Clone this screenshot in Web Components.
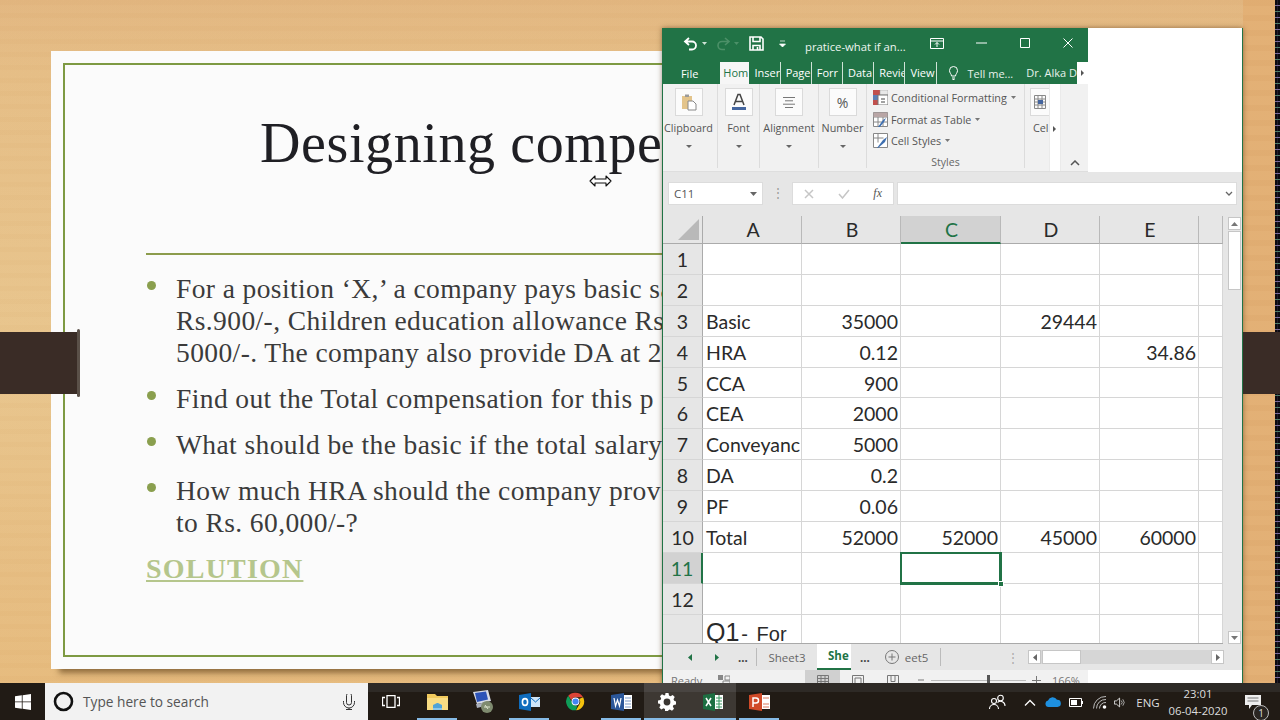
<!DOCTYPE html>
<html>
<head>
<meta charset="utf-8">
<title>Designing compensation</title>
<style>
  html, body { margin: 0; width: 1280px; height: 720px; overflow: hidden; }
  body { font-family: "Open Sans", sans-serif; }
</style>
</head>
<body>
<desk-top>
  <ppt-slide>
    <bullet-item>
      <span>For a position ‘X,’ a company pays basic sa</span>
      <span>Rs.900/-, Children education allowance Rs.</span>
      <span>5000/-. The company also provide DA at 2</span>
    </bullet-item>
    <bullet-item><span>Find out the Total compensation for this p</span></bullet-item>
    <bullet-item><span>What should be the basic if the total salary</span></bullet-item>
    <bullet-item>
      <span>How much HRA should the company prov</span>
      <span>to Rs. 60,000/-?</span>
    </bullet-item>
  </ppt-slide>
  <excel-window></excel-window>
  <win-taskbar></win-taskbar>
</desk-top>

<script>
  const define = (name, html) => {
    customElements.define(name, class extends HTMLElement {
      constructor() {
        super()
        this.attachShadow({ mode: 'open' }).innerHTML = html
      }
    })
  }

  const drop = '<svg width="5" height="3" viewBox="0 0 5 3"><path d="M0 0h5L2.500 3z" fill="#777"/></svg>'

  define('desk-top', `
<style>
  :host {
    display: block;
    position: relative;
    width: 1280px;
    height: 720px;
    overflow: hidden;
    background:
      repeating-linear-gradient(180deg, rgba(190,130,60,.025) 0 5px, rgba(255,235,190,.025) 5px 13px),
      linear-gradient(180deg, #e2b680 0, #e5bd85 10%, #e8c58d 50%, #e6bd82 80%, #e6ba7c 100%);
  }
  .right {
    position: absolute; left: 1243px; top: 0; width: 32px; height: 683px;
    background: repeating-linear-gradient(180deg, rgba(170,100,40,.03) 0 6px, rgba(255,220,170,.03) 6px 15px), #e2af74;
  }
  .noise {
    position: absolute; left: 1275px; top: 0; width: 5px; height: 683px;
    background:
      repeating-linear-gradient(180deg, transparent 0 5px, #7a6a9a 5px 6px, transparent 6px 11px, #4f7d6a 11px 12px),
      repeating-linear-gradient(90deg, #0c0a10 0 2px, #241d2a 2px 3px);
  }
  .band {
    position: absolute; top: 332px; height: 62px; background: #3a2c26;
  }
  .band.l { left: 0; width: 78px; }
  .band.l::after {
    content: ""; position: absolute; right: -2px; top: -3px; bottom: -3px; width: 3px;
    background: #5a5048; border-radius: 2px;
  }
  .band.r { left: 1243px; width: 37px; }
  .cursor { position: absolute; left: 589px; top: 175px; }
</style>
<div class="right"></div>
<div class="noise"></div>
<slot></slot>
<div class="band l"></div>
<div class="band r"></div>
<svg class="cursor" width="24" height="12" viewBox="0 0 24 12">
  <path d="M1 6l5-5v3h11V1l5 5-5 5V8H6v3z" fill="#fff" stroke="#111" stroke-width="1.100" stroke-linejoin="round"/>
</svg>
`)

  define('ppt-slide', `
<style>
  :host {
    display: block;
    position: absolute;
    left: 51px; top: 51px;
    width: 660px; height: 618px;
    box-sizing: border-box;
    padding: 12px;
    background: #fbfbfb;
    box-shadow: 6px 6px 6px -2px rgba(95,65,25,.65);
    font-family: "Liberation Serif", serif;
    color: #3b3b3b;
  }
  .frame {
    box-sizing: border-box;
    height: 100%;
    border: 2px solid #7e9a43;
    border-right: 0;
    padding-top: 48px;
  }
  h1 {
    margin: 0 0 0 195px;
    font-size: 56px;
    line-height: 60px;
    font-weight: 400;
    letter-spacing: .600px;
    color: #1f1f24;
    white-space: nowrap;
  }
  hr {
    margin: 80px 0 18px 81px;
    height: 2px;
    border: 0;
    background: #8c9c4c;
  }
  .list {
    margin-left: 81px;
    display: flex;
    flex-direction: column;
    gap: 14px;
  }
  .sol {
    font-size: 28px;
    line-height: 32px;
    font-weight: 700;
    letter-spacing: 1.200px;
    color: #b5c68c;
    text-decoration: underline;
  }
</style>
<div class="frame">
  <h1>Designing compe</h1>
  <hr>
  <div class="list">
    <slot></slot>
    <div class="sol">SOLUTION</div>
  </div>
</div>
`)

  define('bullet-item', `
<style>
  :host {
    display: block;
    position: relative;
    padding-left: 30px;
    font-size: 27.500px;
    line-height: 32px;
    letter-spacing: .400px;
    white-space: nowrap;
  }
  :host::before {
    content: "";
    position: absolute;
    left: 1px; top: 8px;
    width: 9px; height: 9px;
    border-radius: 50%;
    background: #8a9f4e;
  }
  ::slotted(span) { display: block; }
</style>
<slot></slot>
`)

  define('excel-window', `
<style>
  :host {
    display: block;
    position: absolute;
    left: 662px; top: 28px;
    width: 581px; height: 662px;
    box-sizing: border-box;
    border: 1px solid #217346;
    border-width: 0 1px 0 1px;
    background: #e6e6e6;
    box-shadow: 0 0 5px rgba(80,50,20,.55);
    color: #444;
  }
  .top { display: flex; height: 144px; background: #fff; }
  .left { width: 425px; display: flex; flex-direction: column; }
</style>
<div class="top">
  <div class="left">
    <xl-titlebar></xl-titlebar>
    <xl-ribbon></xl-ribbon>
  </div>
</div>
<xl-formula></xl-formula>
<xl-sheet></xl-sheet>
<xl-tabs></xl-tabs>
<xl-status></xl-status>
`)

  define('xl-titlebar', `
<style>
  :host { display: block; background: #217346; color: #fff; font-size: 11px; }
  .qat { display: flex; align-items: center; height: 34px; box-sizing: border-box; padding-bottom: 4px; }
  .qat > * { flex: none; }
  .name { margin-left: 19px; padding-top: 6px; color: #eef5f0; font-size: 11.300px; white-space: nowrap; }
  .tabs { display: flex; height: 22px; align-items: stretch; white-space: nowrap; }
  .file { width: 55px; padding-right: 4px; text-align: center; line-height: 24px; }
  .tab {
    width: 32px; box-sizing: border-box; padding-left: 5px; overflow: hidden;
    line-height: 22px; border-right: 1px solid #cfe3d7;
  }
  .tab.on { width: 30px; background: #f6f6f6; color: #217346; border: 0; padding-left: 3px; }
  .tell { display: flex; align-items: center; gap: 10px; margin-left: 11px; color: #e7f1eb; width: 71px; }
  .user { margin-left: 10px; width: 51px; line-height: 22px; color: #e7f1eb; }
  .more { width: 11px; background: #fff; display: flex; align-items: center; justify-content: center; }
</style>
<div class="qat">
  <svg style="margin-left:20px" width="15" height="15" viewBox="0 0 15 15"><path d="M6 2L2 5.500 6 9M2.500 5.500H9a3.800 3.800 0 0 1 0 8H6" fill="none" stroke="#fff" stroke-width="1.800"/></svg>
  <svg style="margin-left:4px" width="5" height="3" viewBox="0 0 5 3"><path d="M0 0h5L2.500 3z" fill="#cfe3d7"/></svg>
  <svg style="margin-left:9px" width="15" height="15" viewBox="0 0 15 15"><path d="M9 2l4 3.500L9 9M12.500 5.500H6a3.800 3.800 0 0 0 0 8h3" fill="none" stroke="#4c9068" stroke-width="1.600"/></svg>
  <svg style="margin-left:3px" width="5" height="3" viewBox="0 0 5 3"><path d="M0 0h5L2.500 3z" fill="#4c9068"/></svg>
  <svg style="margin-left:10px" width="15" height="15" viewBox="0 0 15 15"><path d="M1 1h11l2 2v11H1zM4 1.500v4h7v-4M4 14V9.500h7V14M8.500 11v3" fill="none" stroke="#fff" stroke-width="1.600"/></svg>
  <svg style="margin-left:15px" width="7" height="7" viewBox="0 0 7 7"><path d="M1 1h5M0.500 4h6L3.500 7z" fill="#fff" stroke="#fff" stroke-width=".7"/></svg>
  <span class="name">pratice-what if an...</span>
  <svg style="margin-left:24px" width="14" height="11" viewBox="0 0 14 11"><path d="M.5.500h13v10H.5zM.5 3h13M7 9V4.500M5 6.500l2-2 2 2" fill="none" stroke="#fff"/></svg>
  <svg style="margin-left:32px" width="11" height="2" viewBox="0 0 11 2"><path d="M0 1h11" stroke="#fff"/></svg>
  <svg style="margin-left:33px" width="10" height="10" viewBox="0 0 10 10"><path d="M.5.500h9v9h-9z" fill="none" stroke="#fff"/></svg>
  <svg style="margin-left:33px" width="10" height="10" viewBox="0 0 10 10"><path d="M.5.500l9 9M9.500.500l-9 9" stroke="#fff"/></svg>
</div>
<div class="tabs">
  <div class="file">File</div>
  <div class="tab on">Hom</div>
  <div class="tab">Inser</div>
  <div class="tab">Page</div>
  <div class="tab">Forr</div>
  <div class="tab">Data</div>
  <div class="tab">Revie</div>
  <div class="tab">View</div>
  <div class="tell">
    <svg width="9" height="14" viewBox="0 0 9 14" style="margin-left:1px"><path d="M2.500 10C2.500 8 .5 7 .5 4.500a4 4 0 0 1 8 0C8.500 7 6.500 8 6.500 10zM3 12h3M3.500 13.500h2" fill="none" stroke="#fff"/></svg>
    <span>Tell me...</span>
  </div>
  <div class="user">Dr. Alka D.</div>
  <div class="more"><svg width="3" height="6" viewBox="0 0 3 6"><path d="M0 0l3 3-3 3z" fill="#555"/></svg></div>
</div>
`)

  define('rb-big', `
<style>
  :host {
    display: flex; flex-direction: column; align-items: center;
    height: 84px; box-sizing: border-box; padding-top: 4px;
    border-right: 1px solid #dcdcdc;
    font-size: 10.800px; color: #555; white-space: nowrap;
  }
  .box {
    flex: none; width: 28px; height: 28px; box-sizing: border-box;
    background: #fbfbfb; border: 1px solid #dadada;
    display: flex; align-items: center; justify-content: center;
  }
  .label { margin-top: 4px; line-height: 16px; }
  svg.c { margin-top: 9px; }
</style>
<div class="box"><slot></slot></div>
<div class="label"><slot name="label"></slot></div>
<svg class="c" width="6" height="3" viewBox="0 0 6 3"><path d="M0 0h6L3 3z" fill="#666"/></svg>
`)

  define('xl-ribbon', `
<style>
  :host {
    display: flex; height: 88px; box-sizing: border-box;
    background: #f1f1f1; border-bottom: 1px solid #dedede;
    font-size: 10.800px; color: #555;
  }
  rb-big { flex: none; }
  .styles {
    flex: none; width: 158px; height: 84px; box-sizing: border-box; border-right: 1px solid #dcdcdc;
    padding: 3px 0 0 6px; position: relative; white-space: nowrap;
  }
  .cmd { display: flex; align-items: center; height: 21.500px; gap: 3px; }
  .cmd svg:last-child { margin-left: 1px; }
  .cap { position: absolute; left: 0; right: 0; top: 71px; text-align: center; font-size: 10.500px; color: #666; }
  .cells { flex: none; width: 24px; height: 84px; overflow: hidden; padding: 4px 0 0 5px; box-sizing: border-box; white-space: nowrap; }
  .cells .box {
    width: 28px; height: 28px; box-sizing: border-box; background: #fbfbfb; border: 1px solid #dadada;
    display: flex; align-items: center; justify-content: center; padding-right: 8px;
  }
  .cells .l { margin-top: 4px; line-height: 16px; padding-left: 3px; }
  .panel { flex: none; width: 12px; height: 87px; background: #fff; border: 1px solid #eaeaea; border-width: 0 1px; box-sizing: border-box; position: relative; }
  .panel svg { position: absolute; top: 42px; left: 3px; }
  .end { flex: 1; position: relative; }
  .end svg { position: absolute; left: 9px; top: 76px; }
  .pct { font-size: 14px; color: #555; }
</style>
<rb-big style="width:55px;padding-right:3px">
  <svg width="16" height="18" viewBox="0 0 16 18"><path d="M1 3h10v13H1z" fill="#e3c48b"/><path d="M4 1.500h4V4H4z" fill="#9a9a9a"/><path d="M7 8h5l3 3v6H7z" fill="#fff" stroke="#888"/></svg>
  <span slot="label">Clipboard</span>
</rb-big>
<rb-big style="width:42px">
  <svg width="16" height="18" viewBox="0 0 16 18"><path d="M3 12L7 1.500h2L13 12M4.500 8.500h7" fill="none" stroke="#444" stroke-width="1.500"/><path d="M1 14h14v3H1z" fill="#44659e"/></svg>
  <span slot="label">Font</span>
</rb-big>
<rb-big style="width:59px">
  <svg width="14" height="11" viewBox="0 0 14 11"><path d="M1 .5h12M3 3.800h8M1 7.200h12M3 10.500h8" stroke="#777"/></svg>
  <span slot="label">Alignment</span>
</rb-big>
<rb-big style="width:48px">
  <span class="pct">%</span>
  <span slot="label">Number</span>
</rb-big>
<div class="styles">
  <div class="cmd">
    <svg width="15" height="15" viewBox="0 0 15 15"><path d="M0 0h7v5H0z" fill="#c0504d"/><path d="M7 0h8v5H7z" fill="#e8e8e8" stroke="#999" stroke-width=".5"/><path d="M0 5h5v5H0z" fill="#5b7fb5"/><path d="M0 10h5v5H0z" fill="#c0504d"/><path d="M5 5h10v10H5z" fill="#fff" stroke="#777"/><path d="M8 9h4M8 12h4" stroke="#444"/></svg>
    <span>Conditional Formatting</span>${drop}
  </div>
  <div class="cmd">
    <svg width="15" height="15" viewBox="0 0 15 15"><path d="M.5.500h14v14H.5zM.5 5h14M.5 10h14M5 .5v14M10 .5v14" fill="#fff" stroke="#888"/><path d="M.5.500h14V5H.5z" fill="#b9a6a6"/><path d="M5 15l5-7 3-2-2 4-5 6z" fill="#3e6fb0"/></svg>
    <span>Format as Table</span>${drop}
  </div>
  <div class="cmd">
    <svg width="15" height="15" viewBox="0 0 15 15"><path d="M.5.500h14v14H.5zM.5 5h10M5 .5v9" fill="#fff" stroke="#888"/><path d="M4 15l6-8 4-3-2 5-7 6z" fill="#3e6fb0"/></svg>
    <span>Cell Styles</span>${drop}
  </div>
  <div class="cap">Styles</div>
</div>
<div class="cells">
  <div class="box"><svg width="12" height="14" viewBox="0 0 12 14"><path d="M.5.500h11v13H.5zM.5 4h11M.5 7h11M.5 10h11M4 .5v13M8 .5v13" fill="none" stroke="#888"/><path d="M4 5h5v4H4z" fill="#44659e"/></svg></div>
  <div class="l">Cel</div>
</div>
<div class="panel"><svg width="3" height="6" viewBox="0 0 3 6"><path d="M0 0l3 3-3 3z" fill="#555"/></svg></div>
<div class="end"><svg width="10" height="6" viewBox="0 0 10 6"><path d="M1 5l4-4 4 4" fill="none" stroke="#555" stroke-width="1.500"/></svg></div>
`)

  define('xl-formula', `
<style>
  :host { display: flex; height: 44px; box-sizing: border-box; padding: 10px 5px 0 5px; align-items: flex-start; background: #e6e6e6; }
  .name, .btns, .input { height: 23px; box-sizing: border-box; background: #fff; border: 1px solid #dcdcdc; display: flex; align-items: center; }
  .name { width: 95px; padding: 0 5px; justify-content: space-between; font-size: 11.500px; color: #555; }
  .dots { width: 29px; text-align: center; color: #999; font-size: 12px; line-height: 21px; }
  .btns { width: 102px; justify-content: space-between; padding: 0 11px; }
  .fx { font: italic 12px "Liberation Serif", serif; color: #555; }
  .input { flex: 1; margin-left: 3px; justify-content: flex-end; padding-right: 3px; }
</style>
<div class="name"><span>C11</span><svg width="7" height="4" viewBox="0 0 7 4"><path d="M0 0h7L3.500 4z" fill="#666"/></svg></div>
<div class="dots">⋮</div>
<div class="btns">
  <svg width="10" height="10" viewBox="0 0 10 10"><path d="M1 1l8 8M9 1l-8 8" stroke="#c6c6c6" stroke-width="1.500"/></svg>
  <svg width="12" height="10" viewBox="0 0 12 10"><path d="M1 5l3.500 4L11 1" fill="none" stroke="#c6c6c6" stroke-width="1.500"/></svg>
  <span class="fx">fx</span>
</div>
<div class="input"><svg width="8" height="5" viewBox="0 0 8 5"><path d="M1 1l3 3 3-3" fill="none" stroke="#666" stroke-width="1.300"/></svg></div>
`)

  customElements.define('xl-sheet', class extends HTMLElement {
    constructor() {
      super()
      this.attachShadow({ mode: 'open' }).innerHTML = `
<style>
  :host { display: flex; height: 428px; background: #e6e6e6; }
  .grid {
    width: 560px; height: 428px; overflow: hidden; flex: none;
    display: grid;
    grid-template-columns: 40px 99px 99px 100px 99px 99px 24px;
    grid-template-rows: 28px repeat(13, 30.900px);
    font: 19.500px/32px Lato, sans-serif;
    color: #2a2a2a;
    background: #fff;
    border-bottom: 1px solid #a9a9a9;
    box-sizing: border-box;
  }
  .cell { box-sizing: border-box; border: 1px solid #d6d6d6; border-width: 0 1px 1px 0; padding: 0 3px; overflow: hidden; white-space: nowrap; }
  .num { text-align: right; padding-right: 2px; }
  .hd { background: #e6e6e6; text-align: center; line-height: 28px; padding: 0 0 0 2px; border-right-color: #b9b9b9; border-bottom-color: #ababab; }
  .hd.off { background: #d2d2d2; color: #217346; border-bottom: 2px solid #217346; }
  .row { background: #e6e6e6; text-align: center; padding: 0; border-right-color: #ababab; }
  .row.off { background: #d2d2d2; color: #217346; border-right: 2px solid #217346; }
  .corner { position: relative; background: #e6e6e6; border-right: 1px solid #ababab; border-bottom: 1px solid #ababab; }
  .corner::after {
    content: ""; position: absolute; left: 15px; top: 3px; width: 21px; height: 21px;
    background: #b9b9b9; clip-path: polygon(100% 0, 100% 100%, 0 100%);
  }
  .sel { position: relative; overflow: visible; border-color: #217346; box-shadow: 0 0 0 1px #217346, inset 0 0 0 1px #217346; z-index: 1; }
  .sel::after {
    content: ""; position: absolute; right: -4px; bottom: -4px; width: 6px; height: 6px;
    background: #217346; border: 1px solid #fff; box-sizing: border-box;
  }
  .q { font: 25px/34px "Liberation Sans", sans-serif; padding-top: 0; overflow: visible; }
  .q span { font-size: 20px; margin-left: 2px; word-spacing: 3px; }
  .vs { flex: 1; display: flex; flex-direction: column; align-items: center; padding: 1px 0 0 3px; }
  .btn { flex: none; width: 13px; height: 13px; background: #fff; border: 1px solid #c6c6c6; box-sizing: border-box; display: flex; align-items: center; justify-content: center; }
  .thumb { flex: none; width: 13px; height: 59px; background: #fff; border: 1px solid #c6c6c6; box-sizing: border-box; margin-top: 1px; }
  .gap { flex: 1; }
</style>
<div class="grid"></div>
<div class="vs">
  <div class="btn"><svg width="7" height="4" viewBox="0 0 7 4"><path d="M3.500 0L7 4H0z" fill="#777"/></svg></div>
  <div class="thumb"></div>
  <div class="gap"></div>
  <div class="btn"><svg width="7" height="4" viewBox="0 0 7 4"><path d="M0 0h7L3.500 4z" fill="#777"/></svg></div>
</div>
`
      this.rows = {
        3: ['Basic', '35000', '', '29444', ''],
        4: ['HRA', '0.12', '', '', '34.86'],
        5: ['CCA', '900', '', '', ''],
        6: ['CEA', '2000', '', '', ''],
        7: ['Conveyanc', '5000', '', '', ''],
        8: ['DA', '0.2', '', '', ''],
        9: ['PF', '0.06', '', '', ''],
        10: ['Total', '52000', '52000', '45000', '60000']
      }
    }

    connectedCallback() {
      const grid = this.shadowRoot.querySelector('.grid')
      let html = '<div class="corner"></div>'
      for (const col of ['A', 'B', 'C', 'D', 'E', '']) {
        html += `<div class="cell hd ${col === 'C' ? 'off' : ''}">${col}</div>`
      }
      for (let r = 1; r <= 13; r++) {
        html += `<div class="cell row ${r === 11 ? 'off' : ''}">${r === 13 ? '' : r}</div>`
        const values = this.rows[r] || ['', '', '', '', '']
        values.forEach((value, i) => {
          if (r === 13 && i === 0) {
            html += '<div class="cell q">Q1<span>- For</span></div>'
            return
          }
          const sel = r === 11 && i === 2 ? 'sel' : ''
          html += `<div class="cell ${i > 0 ? 'num' : ''} ${sel}">${value}</div>`
        })
        html += '<div class="cell"></div>'
      }
      grid.innerHTML = html
    }
  })

  define('xl-tabs', `
<style>
  :host { display: flex; align-items: center; height: 26px; background: #e6e6e6; font-size: 11.500px; color: #666; white-space: nowrap; }
  .more { font-weight: 700; color: #444; }
  .sep { width: 1px; height: 18px; background: #bbb; }
  .tab { text-align: center; }
  .on {
    width: 34px; height: 26px; box-sizing: border-box; background: #fff; overflow: hidden;
    border-bottom: 2px solid #217346; color: #217346; font-weight: 700; padding: 4px 0 0 11px;
  }
  .track { display: flex; align-items: center; width: 196px; height: 14px; margin-left: 7px; background: #d6d6d6; }
  .b { flex: none; width: 13px; height: 14px; box-sizing: border-box; background: #fff; border: 1px solid #c6c6c6; display: flex; align-items: center; justify-content: center; }
  .t { flex: none; width: 39px; height: 14px; box-sizing: border-box; background: #fff; border: 1px solid #c6c6c6; margin-left: 1px; }
  .g { flex: 1; }
</style>
<svg style="margin-left:25px" width="4" height="7" viewBox="0 0 4 7"><path d="M4 0v7L0 3.500z" fill="#217346"/></svg>
<svg style="margin-left:23px" width="4" height="7" viewBox="0 0 4 7"><path d="M0 0v7l4-3.500z" fill="#217346"/></svg>
<span class="more" style="margin-left:19px;width:18px">...</span>
<span class="sep"></span>
<span class="tab" style="width:60px">Sheet3</span>
<span class="on">She</span>
<span class="more" style="margin-left:9px">...</span>
<svg style="margin-left:15px" width="14" height="14" viewBox="0 0 14 14"><circle cx="7" cy="7" r="6.500" fill="none" stroke="#777"/><path d="M3.500 7h7M7 3.500v7" stroke="#777"/></svg>
<span style="margin-left:6px">eet5</span>
<span class="sep" style="margin-left:12px"></span>
<span style="margin-left:66px;color:#aaa;width:14px">⋮</span>
<div class="track">
  <div class="b"><svg width="4" height="7" viewBox="0 0 4 7"><path d="M4 0v7L0 3.500z" fill="#666"/></svg></div>
  <div class="t"></div>
  <div class="g"></div>
  <div class="b"><svg width="4" height="7" viewBox="0 0 4 7"><path d="M0 0v7l4-3.500z" fill="#666"/></svg></div>
</div>
`)

  define('xl-status', `
<style>
  :host { display: flex; height: 20px; background: #fff; font-size: 11px; color: #777; }
  .bar { width: 425px; display: flex; align-items: center; background: #f1f1f1; white-space: nowrap; }
  .view { flex: none; width: 35px; height: 20px; display: flex; align-items: center; justify-content: center; }
  .view.on { background: #d0d0d0; }
  .slider { width: 95px; height: 1px; background: #bbb; margin-left: 7px; position: relative; }
  .slider::after { content: ""; position: absolute; left: 56px; top: -5px; width: 3px; height: 10px; background: #555; }
</style>
<div class="bar">
  <span style="margin-left:8px;width:47px">Ready</span>
  <svg width="12" height="10" viewBox="0 0 12 10"><path d="M0 0h5v5H0z" fill="#888"/><path d="M5 6h7v3H5zM7 1h5v4H7z" fill="none" stroke="#888"/></svg>
  <span style="flex:none;width:75px"></span>
  <span class="view on"><svg width="12" height="10" viewBox="0 0 12 10"><path d="M.5.500h11v9H.5zM.5 3.500h11M.5 6.500h11M4 .5v9M8 .5v9" fill="none" stroke="#777"/></svg></span>
  <span class="view"><svg width="12" height="10" viewBox="0 0 12 10"><path d="M.5.500h11v9H.5zM3 3h6v7H3z" fill="none" stroke="#777"/></svg></span>
  <span class="view"><svg width="12" height="10" viewBox="0 0 12 10"><path d="M.5.500h11v9H.5zM4 .5v6h4v-6" fill="none" stroke="#777"/></svg></span>
  <svg style="margin-left:8px" width="6" height="2" viewBox="0 0 6 2"><path d="M0 1h6" stroke="#777"/></svg>
  <span class="slider"></span>
  <svg style="margin-left:6px" width="9" height="9" viewBox="0 0 9 9"><path d="M0 4.500h9M4.500 0v9" stroke="#777"/></svg>
  <span style="margin-left:11px">166%</span>
</div>
`)

  define('task-app', `
<style>
  :host {
    flex: none; width: 46px; height: 37px; position: relative; box-sizing: border-box;
    display: flex; align-items: center; justify-content: center;
  }
  :host([active]) { background: rgba(255,255,255,.13); }
  :host([open])::after {
    content: ""; position: absolute; left: 3px; right: 3px; bottom: 0; height: 2px; background: #86bbe6;
  }
  :host([active])::after { left: 0; right: 0; }
</style>
<slot></slot>
`)

  define('win-taskbar', `
<style>
  :host {
    display: flex; position: absolute; left: 0; top: 683px; width: 1280px; height: 37px;
    background: linear-gradient(180deg, #2e2a26 0 9px, #211b15 9px);
    color: #eee; font-size: 11.500px;
  }
  .start { flex: none; width: 45px; display: flex; align-items: center; justify-content: center; background: #211b15; }
  .search {
    flex: none; width: 323px; display: flex; align-items: center; box-sizing: border-box;
    padding: 0 13px 0 8px; background: #f2f2f2; color: #555; font-size: 13.700px;
  }
  .search span { margin-left: 9px; flex: 1; }
  .tray { display: flex; align-items: center; position: absolute; left: 980px; top: 0; height: 37px; }
  .tray > * { flex: none; display: flex; justify-content: center; align-items: center; padding-top: 1px; }
  .clock { width: 56px; flex-direction: column; line-height: 17px; font-size: 11.300px; color: #ddd; white-space: nowrap; }
  .note { position: relative; }
  .badge {
    position: absolute; left: 13px; top: 11px; width: 14px; height: 14px; border-radius: 50%;
    border: 1px solid #bbb; background: #2a2622; color: #ddd; font-size: 10px; line-height: 14px; text-align: center;
  }
</style>
<div class="start">
  <svg width="16" height="16" viewBox="0 0 16 16"><path d="M0 2.300L6.800 1.300v6.200H0zM7.600 1.200L16 0v7.500H7.600zM0 8.300h6.800v6.400L0 13.700zM7.600 8.300H16V16l-8.400-1.200z" fill="#fff"/></svg>
</div>
<div class="search">
  <svg width="21" height="21" viewBox="0 0 21 21"><circle cx="10.500" cy="10.500" r="8.500" fill="none" stroke="#111" stroke-width="2.600"/></svg>
  <span>Type here to search</span>
  <svg width="12" height="16" viewBox="0 0 12 16"><path d="M3.500 1.500a2.500 2.500 0 0 1 5 0v7a2.500 2.500 0 0 1-5 0zM.5 7v1.500a5.500 5.500 0 0 0 11 0V7M6 14v1.500M3 15.500h6" fill="none" stroke="#333"/></svg>
</div>
<task-app><svg width="18" height="13" viewBox="0 0 18 13"><path d="M5 .5h8v12H5zM3 2.500H.5v8H3M15 2.500h2.500v8H15" fill="none" stroke="#fff" stroke-width="1.300"/></svg></task-app>
<task-app open>
  <svg width="21" height="18" viewBox="0 0 21 18"><path d="M0 1h8l2 2h11v14H0z" fill="#f0c95c"/><path d="M0 5h21v12H0z" fill="#f8dc83"/><path d="M6 17v-5l4-2h1l4 2v5z" fill="#4fa3d8"/><path d="M6 17h9v-2H6z" fill="#8ac6ea"/></svg>
</task-app>
<task-app>
  <svg width="22" height="24" viewBox="0 0 22 24"><path d="M1 2l15-2 3 11-14 3z" fill="#d7dbe6"/><path d="M3 3l11-1.500 2 8L5 12z" fill="#2c53b8"/><path d="M4 14l12-2 1 3-12 3z" fill="#aab0bc"/><circle cx="15" cy="17" r="6" fill="#7f8b6f"/><path d="M12 17h6M13 15l3 4" stroke="#dfe6d0"/></svg>
</task-app>
<task-app open>
  <svg width="21" height="18" viewBox="0 0 21 18"><path d="M0 2l12-2v18L0 16z" fill="#0f6cbd"/><path d="M12 4h9v10h-9z" fill="#cfe4f6"/><path d="M12 5l4.500 4L21 5" fill="none" stroke="#0f6cbd"/><ellipse cx="6" cy="9" rx="2.600" ry="3.400" fill="none" stroke="#fff" stroke-width="1.600"/></svg>
</task-app>
<task-app>
  <svg width="21" height="21" viewBox="0 0 48 48"><path d="M24 4a20 20 0 0 1 17.300 10H24a10 10 0 0 0-9.500 7L7.500 11A20 20 0 0 1 24 4z" fill="#db4437"/><path d="M41.300 14A20 20 0 0 1 25 44l8.700-15A10 10 0 0 0 32 18z" fill="#f4c20d"/><path d="M25 44A20 20 0 0 1 7.500 11l8.700 15a10 10 0 0 0 12 7z" fill="#0f9d58"/><circle cx="24" cy="24" r="9" fill="#fff"/><circle cx="24" cy="24" r="7" fill="#4285f4"/></svg>
</task-app>
<task-app open>
  <svg width="21" height="18" viewBox="0 0 21 18"><path d="M0 2l13-2v18L0 16z" fill="#2b579a"/><path d="M13 2h8v14h-8z" fill="#fff"/><path d="M14 5h6M14 8h6M14 11h6M14 14h6" stroke="#7d9bc9"/><path d="M3 5l1.500 8L6.500 7l2 6L10 5" fill="none" stroke="#fff" stroke-width="1.200"/></svg>
</task-app>
<task-app open active>
  <svg width="18" height="18" viewBox="0 0 18 18"><path d="M7.500 0h3l.5 2.500 1.500.7L14.700 2l2 2-1.200 2.200.7 1.500L18 8.500v3l-2.500.5-.7 1.500 1.200 2.200-2 2-2.200-1.200-1.500.7-.3 1.800h-3L7 16l-1.500-.7-2.200 1.200-2-2L2.500 12.300 1.800 10.800 0 10.500v-3l2.500-.5.700-1.500L2 3.300l2-2 2.200 1.200L7.200 2z" fill="#fff"/><circle cx="9" cy="9" r="3.400" fill="#3a3632"/></svg>
</task-app>
<task-app open active>
  <svg width="20" height="18" viewBox="0 0 20 18"><path d="M0 2l12-2v18L0 16z" fill="#1d6f42"/><path d="M12 2h8v14h-8z" fill="#fff"/><path d="M13 5h6M13 8h6M13 11h6M13 14h6M16 2v14" stroke="#3a9a63"/><path d="M3 5l5 8M8 5l-5 8" stroke="#fff" stroke-width="1.500"/></svg>
</task-app>
<task-app open>
  <svg width="21" height="18" viewBox="0 0 21 18"><path d="M0 2l13-2v18L0 16z" fill="#d04a28"/><path d="M13 2h8v14h-8z" fill="#fff"/><path d="M14 5h6M14 11h6M14 14h6" stroke="#d9785c"/><path d="M4 14V5h3a2.500 2.500 0 0 1 0 5H4" fill="none" stroke="#fff" stroke-width="1.500"/></svg>
</task-app>
<div class="tray">
  <span style="width:34px"><svg width="17" height="16" viewBox="0 0 17 16"><circle cx="11.500" cy="4" r="2.800" fill="none" stroke="#fff" stroke-width="1.100"/><circle cx="5" cy="7" r="2.500" fill="none" stroke="#fff" stroke-width="1.100"/><path d="M.5 15a4.500 4.500 0 0 1 9 0M8.500 8.500a4.500 4.500 0 0 1 7.500 3.500" fill="none" stroke="#fff" stroke-width="1.100"/></svg></span>
  <span style="width:20px;margin-left:6px"><svg width="12" height="7" viewBox="0 0 12 7"><path d="M1 6.500L6 1.500l5 5" fill="none" stroke="#fff" stroke-width="1.300"/></svg></span>
  <span style="width:26px"><svg width="16" height="10" viewBox="0 0 16 10"><path d="M3.500 10A3.300 3.300 0 0 1 3 3.500 5 5 0 0 1 12 2.800 3.600 3.600 0 0 1 12.500 10z" fill="#1e90e0"/></svg></span>
  <span style="width:20px"><svg width="14" height="9" viewBox="0 0 14 9"><path d="M.5.500h12v8H.5z" fill="none" stroke="#fff"/><path d="M2 2h6v5H2z" fill="#fff"/><path d="M13 3h1v3h-1z" fill="#fff"/></svg></span>
  <span style="width:28px"><svg width="14" height="13" viewBox="0 0 14 13"><path d="M.5 12.500A12 12 0 0 1 13 .5M3.500 12.500a9 9 0 0 1 9.500-9M6.500 12.500a6 6 0 0 1 6.500-6" fill="none" stroke="#bbb"/><circle cx="11.500" cy="11" r="1.800" fill="#fff"/></svg></span>
  <span style="width:12px"><svg width="15" height="13" viewBox="0 0 15 13"><path d="M.5 4.500h2.500L7 1v11L3 8.500H.5z" fill="none" stroke="#fff"/><path d="M9 4a3.500 3.500 0 0 1 0 5M11 2.500a6 6 0 0 1 0 8" fill="none" stroke="#ccc"/></svg></span>
  <span style="width:44px;color:#ddd">ENG</span>
  <span class="clock"><span>23:01</span><span>06-04-2020</span></span>
  <span class="note" style="width:26px;margin-left:14px">
    <svg width="16" height="14" viewBox="0 0 16 14"><path d="M0 0h16v10H7l-3 4v-4H0z" fill="#eee"/><path d="M2.500 3h11M2.500 6h11" stroke="#777"/></svg>
    <span class="badge">1</span>
  </span>
</div>
`)
</script>
</body>
</html>
